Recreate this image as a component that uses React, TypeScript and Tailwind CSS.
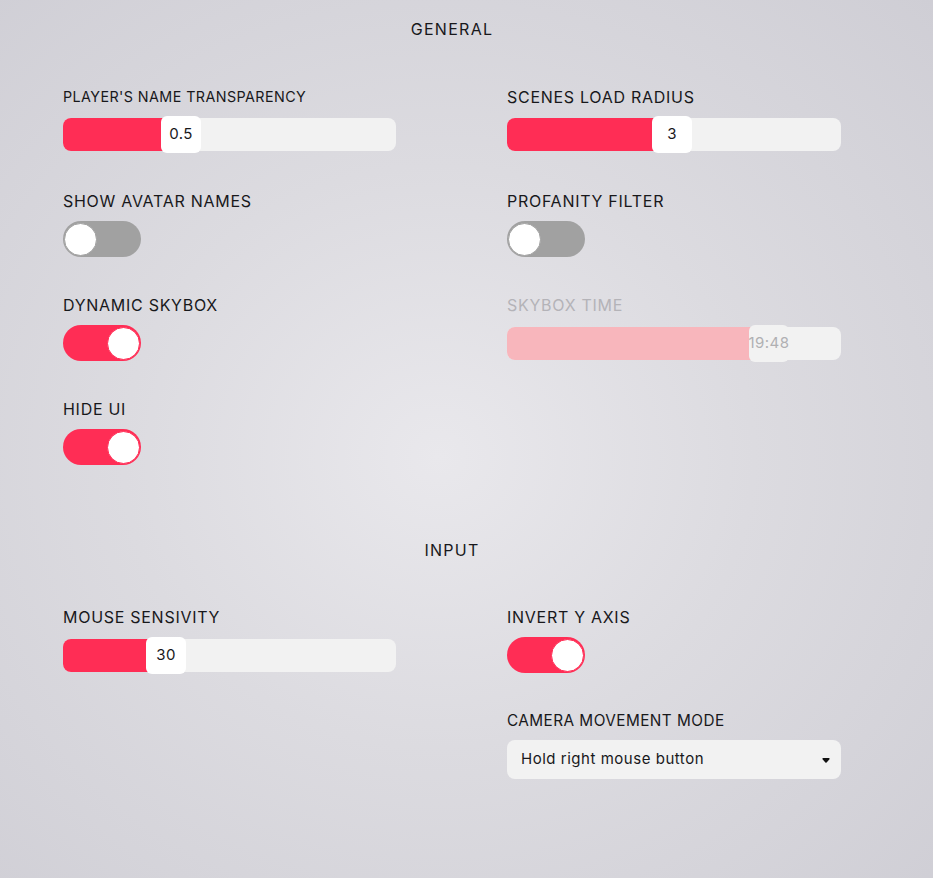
import React from "react";

const RED = "bg-[#ff2d55]";

function Label({ children, size, muted }: { children: React.ReactNode; size?: "sm" | "md"; muted?: boolean }) {
  const sizing =
    size === "sm"
      ? "text-[14.3px] tracking-[0.03em]"
      : size === "md"
      ? "text-[15.3px] tracking-[0.03em]"
      : "text-[16px] tracking-[0.045em]";
  return (
    <div className={`h-5 leading-5 ${sizing} ${muted ? "text-[#b4b3b8]" : "text-[#18181b]"}`}>{children}</div>
  );
}

function Slider({ value, thumbLeft, disabled }: { value: string; thumbLeft: number; disabled?: boolean }) {
  return (
    <div className="relative h-[33px] w-full rounded-lg bg-[#f2f2f2]">
      <div
        className={`absolute left-0 top-0 h-full rounded-l-lg ${disabled ? "bg-[#f8b6bc]" : RED}`}
        style={{ width: thumbLeft + 8 }}
      />
      <div
        className={`absolute -top-[2px] -bottom-[2px] flex w-[40px] items-center justify-center rounded-md text-[15px] tracking-[0.03em] ${
          disabled ? "bg-[#f2f2f2] text-[#b0b0b3]" : "bg-white text-[#18181b]"
        }`}
        style={{ left: thumbLeft }}
      >
        {value}
      </div>
    </div>
  );
}

function Toggle({ on }: { on?: boolean }) {
  return (
    <div
      className={`flex h-[36px] w-[78px] items-center rounded-full px-[1px] ${
        on ? `${RED} justify-end` : "bg-[#a1a1a1] justify-start"
      }`}
    >
      <div
        className={`h-[33px] w-[33px] rounded-full bg-white border ${on ? "border-[#ff2d55]" : "border-[#a1a1a1]"}`}
      />
    </div>
  );
}

function Row({ children }: { children: React.ReactNode }) {
  return <div className="flex h-[104px] flex-col">{children}</div>;
}

function Heading({ children }: { children: React.ReactNode }) {
  return (
    <div className="h-6 text-center text-[16px] leading-6 tracking-[0.08em] text-[#18181b]">{children}</div>
  );
}

export default function App() {
  return (
    <div
      className="min-h-[878px] w-full bg-[radial-gradient(ellipse_at_47%_52%,#e9e8ec_0%,#dcdbe0_45%,#cfced5_100%)]"
      style={{ fontFamily: "Inter, 'Noto Sans', sans-serif" }}
    >
      <div className="w-[778px] ml-[63px] pt-[17px]">
        <Heading>GENERAL</Heading>
        <div className="mt-[46px] grid grid-cols-[333px_334px] gap-x-[111px]">
          <div className="flex flex-col">
            <Row>
              <Label size="sm">PLAYER'S NAME TRANSPARENCY</Label>
              <div className="mt-[11px]">
                <Slider value="0.5" thumbLeft={98} />
              </div>
            </Row>
            <Row>
              <Label>SHOW AVATAR NAMES</Label>
              <div className="mt-[10px]">
                <Toggle />
              </div>
            </Row>
            <Row>
              <Label>DYNAMIC SKYBOX</Label>
              <div className="mt-[10px]">
                <Toggle on />
              </div>
            </Row>
            <Row>
              <Label>HIDE UI</Label>
              <div className="mt-[10px]">
                <Toggle on />
              </div>
            </Row>
          </div>
          <div className="flex flex-col">
            <Row>
              <Label>SCENES LOAD RADIUS</Label>
              <div className="mt-[11px]">
                <Slider value="3" thumbLeft={145} />
              </div>
            </Row>
            <Row>
              <Label>PROFANITY FILTER</Label>
              <div className="mt-[10px]">
                <Toggle />
              </div>
            </Row>
            <Row>
              <Label muted>SKYBOX TIME</Label>
              <div className="mt-[12px]">
                <Slider value="19:48" thumbLeft={242} disabled />
              </div>
            </Row>
          </div>
        </div>

        <div className="mt-[35px]">
          <Heading>INPUT</Heading>
        </div>
        <div className="mt-[45px] grid grid-cols-[333px_334px] gap-x-[111px]">
          <div className="flex flex-col">
            <Row>
              <Label>MOUSE SENSIVITY</Label>
              <div className="mt-[12px]">
                <Slider value="30" thumbLeft={83} />
              </div>
            </Row>
          </div>
          <div className="flex flex-col">
            <Row>
              <Label>INVERT Y AXIS</Label>
              <div className="mt-[10px]">
                <Toggle on />
              </div>
            </Row>
            <Row>
              <Label size="md">CAMERA MOVEMENT MODE</Label>
              <div className="mt-[9px] flex h-[39px] items-center justify-between rounded-lg bg-[#f2f2f2] pl-[14px] pr-[11px]">
                <span className="text-[15px] tracking-[0.035em] text-[#18181b]">Hold right mouse button</span>
                <svg width="8" height="5" viewBox="0 0 8 5" className="mt-[1px]">
                  <path d="M0.3 0.9 Q0.3 0 1.3 0 L6.7 0 Q7.7 0 7.7 0.9 L4.6 4.6 Q4 5.1 3.4 4.6 Z" fill="#111" />
                </svg>
              </div>
            </Row>
          </div>
        </div>
      </div>
    </div>
  );
}
